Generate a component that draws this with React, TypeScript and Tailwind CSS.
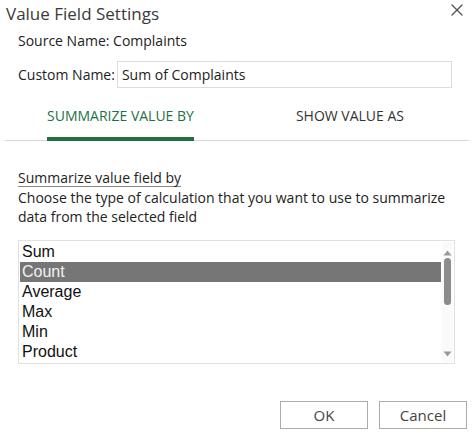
import { X } from "lucide-react";

const items = ["Sum", "Count", "Average", "Max", "Min", "Product"];

export default function App() {
  return (
    <div className="w-[474px] h-[437px] bg-white text-[#333] font-['Open_Sans',sans-serif] flex flex-col">
      {/* Title bar */}
      <div className="flex items-start justify-between">
        <h1 className="pl-[6px] pt-[1px] text-[17px] leading-[26px] text-[#3a3a3a]">Value Field Settings</h1>
        <X className="w-[20px] h-[20px] mt-0 mr-[7px] text-[#555]" strokeWidth={1.6} />
      </div>

      <div className="px-[18px] mt-[4px] text-[14px] leading-[20px] text-[#222]">Source Name: Complaints</div>

      <div className="flex items-center px-[18px] mt-[10px] text-[14px] text-[#222]">
        <span>Custom Name:</span>
        <div className="ml-[2px] w-[335px] h-[27px] border border-[#dcdcdc] flex items-center px-[4px]">
          Sum of Complaints
        </div>
      </div>

      {/* Tabs */}
      <div className="mx-[5px] mt-[10px] flex border-b border-[#d8d8d8] text-[14px] leading-[20px]">
        <div className="ml-[42px] pt-[8px] pb-[11px] border-b-[4px] border-[#1e7145] text-[#1e7145] -mb-[1px]">SUMMARIZE VALUE BY</div>
        <div className="ml-[102px] pt-[8px] text-[#333]">SHOW VALUE AS</div>
      </div>

      <div className="px-[18px] mt-[27px] text-[14px] leading-[19px] text-[#222]">
        <div className="inline-block border-b border-[#888] leading-[17px]">Summarize value field by</div>
        <p className="mt-[1px]">Choose the type of calculation that you want to use to summarize data from the selected field</p>
      </div>

      {/* List */}
      <div className="mx-[18px] mt-[14px] w-[437px] h-[124px] border border-[#e1e1e1] flex p-[1px] font-['Liberation_Sans',Arial,sans-serif] text-[16px]">
        <div className="flex-1 flex flex-col">
          {items.map((it) => (
            <div
              key={it}
              className={
                it === "Count"
                  ? "h-[20px] leading-[20px] px-[2px] bg-[#767676] text-[#f2f2f2]"
                  : "h-[20px] leading-[20px] px-[2px] text-[#111]"
              }
            >
              {it}
            </div>
          ))}
        </div>
        <div className="w-[11px] flex flex-col items-center ml-[1px] bg-[#fafafa]">
          <svg width="9" height="6" viewBox="0 0 9 6" className="mt-[8px]">
            <path d="M0.5 5.5 L4.5 0.5 L8.5 5.5 Z" fill="#999" />
          </svg>
          <div className="mt-[2px] w-[7px] h-[47px] rounded-[4px] bg-[#8c8c8c]" />
          <div className="flex-1" />
          <svg width="9" height="6" viewBox="0 0 9 6" className="mb-[5px]">
            <path d="M0.5 0.5 L4.5 5.5 L8.5 0.5 Z" fill="#999" />
          </svg>
        </div>
      </div>

      {/* Buttons */}
      <div className="flex justify-end gap-[11px] mr-[7px] mt-[37px] text-[15px]">
        <button className="w-[88px] h-[28px] border border-[#ababab] bg-white text-[#444]">OK</button>
        <button className="w-[88px] h-[28px] border border-[#ababab] bg-white text-[#444]">Cancel</button>
      </div>
    </div>
  );
}
